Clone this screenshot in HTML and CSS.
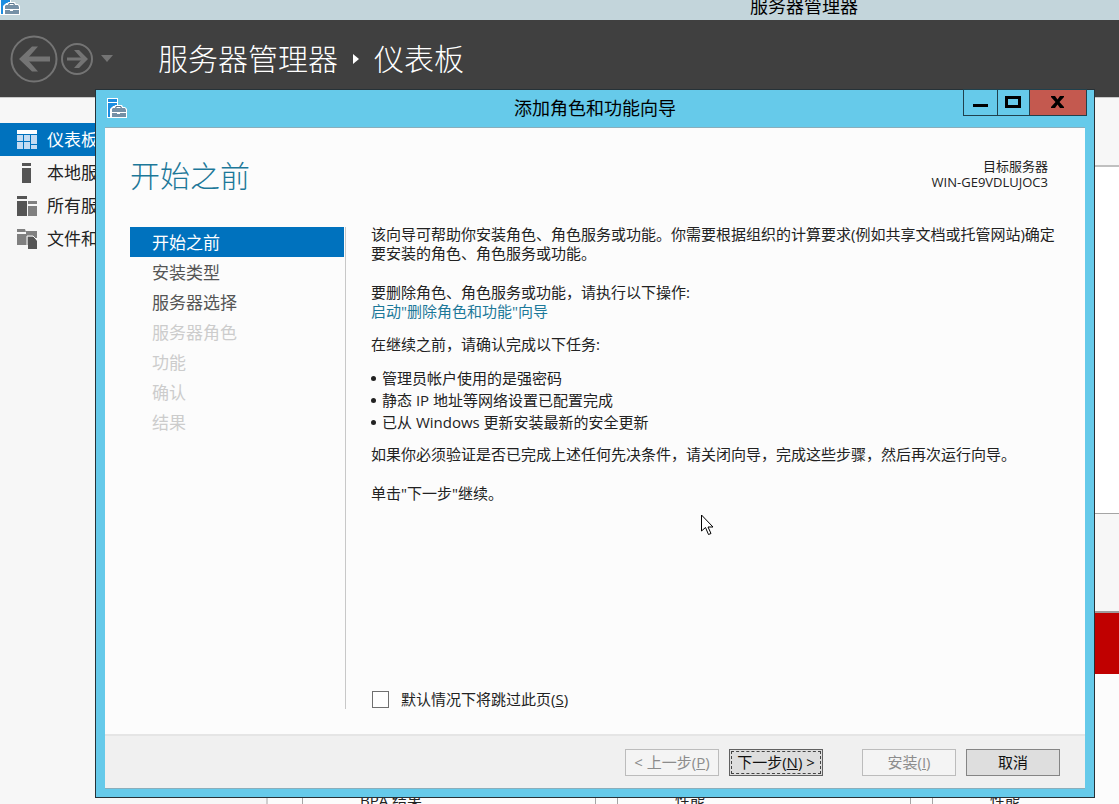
FILE: index.html
```html
<!DOCTYPE html>
<html lang="zh-CN">
<head>
<meta charset="utf-8">
<title>服务器管理器</title>
<link rel="stylesheet" href="styles.css">
</head>
<body>
<svg class="defs" aria-hidden="true">
  <symbol id="app-icon" viewBox="0 0 20 20">
    <path d="M0 0h11v9H7v11H0z" fill="#fff"/>
    <path d="M1 1h9v3H1zM1 5h9v3H6l-2 3v8H1z" fill="#1c8de0"/>
    <path d="M3 11l2-2h2l1-2h7l1 2h2l2 2v9H3z" fill="#fff"/>
    <path d="M5 11l1-1h12l1 2v2H5zM5 15h5v1h3v-1h6v4H5z" fill="#7590a6"/>
    <path d="M8 10l1-2h5l1 2h-1l-1-1h-3l-1 1z" fill="#5c7890"/>
  </symbol>
</svg>

<div class="manager">
  <header class="manager-title">
    <svg class="manager-icon"><use href="#app-icon"/></svg>
    <span>服务器管理器</span>
  </header>

  <div class="banner">
    <button class="nav-button" type="button" aria-label="后退">
      <svg width="48" height="48" viewBox="0 0 48 48" fill="none" stroke="#747474"><circle cx="24" cy="24" r="22.5" stroke-width="2"/><path d="M40 24H14" stroke-width="5"/><path d="M9 24L22 11.500h6L17 24l11 12.500h-6z" fill="#747474" stroke="none"/></svg>
    </button>
    <button class="nav-button" type="button" aria-label="前进">
      <svg width="36" height="34" viewBox="-2 0 36 34" fill="none" stroke="#747474"><circle cx="17" cy="17" r="15" stroke-width="2"/><path d="M7 17h16" stroke-width="3"/><path d="M28 17l-9-9h-5l8 9-8 9h5z" fill="#747474" stroke="none"/></svg>
    </button>
    <button class="nav-button nav-more" type="button" aria-label="历史记录">
      <svg width="14" height="8" viewBox="0 0 14 8"><path d="M1 0h12L7 7z" fill="#747474"/></svg>
    </button>
    <h1 class="crumbs">
      <span>服务器管理器</span>
      <svg width="6" height="10" viewBox="0 0 6 10"><path d="M0 0l6 5-6 5z" fill="#fff"/></svg>
      <span>仪表板</span>
    </h1>
  </div>

  <div class="workspace">
    <nav class="sidebar">
      <a class="side-item side-item-active" href="#dashboard">
        <svg width="20" height="19" viewBox="0 0 20 19"><path d="M0 0h20v4H0z" fill="#fff"/><path d="M0 5h6v6H0zM0 12h6v7H0zM7 5h6v6H7zM7 12h6v7H7zM14 5h6v9h-6zM14 15h6v4h-6z" fill="#c4dcf2"/></svg>
        <span>仪表板</span>
      </a>
      <a class="side-item" href="#local">
        <svg width="20" height="20" viewBox="0 0 20 20"><path d="M5 0h9v3H5zM5 5h9v15H5z" fill="#555"/></svg>
        <span>本地服务器</span>
      </a>
      <a class="side-item" href="#all">
        <svg width="20" height="20" viewBox="0 0 20 20"><path d="M0 0h10v3H0zM0 5h10v15H0z" fill="#555"/><path d="M11 5h9v3h-9zM11 10h9v10h-9z" fill="#808080"/></svg>
        <span>所有服务器</span>
      </a>
      <a class="side-item" href="#files">
        <svg width="20" height="20" viewBox="0 0 20 20"><path d="M0 0h8l1 3H0zM0 5h9V2h11v7h-9v7H0z" fill="#808080"/><path d="M11 8h6l3 4v8h-9z" fill="#555"/><path d="M10 20V7h6l4 4" fill="none" stroke="#f7f7f7"/></svg>
        <span>文件和存储</span>
      </a>
    </nav>
    <main class="dashboard">
      <div class="welcome-head"></div>
      <div class="welcome"></div>
      <div class="tiles">
        <section class="tile"><div class="tile-head"></div><div class="tile-status"></div><p>BPA 结果</p></section>
        <section class="tile"><div class="tile-head"></div><div class="tile-status"></div><p>性能</p></section>
        <section class="tile"><div class="tile-head"></div><div class="tile-status"></div><p>性能</p></section>
      </div>
    </main>
  </div>
</div>

<div class="wizard" role="dialog" aria-labelledby="wizard-title">
  <header class="wizard-title">
    <svg class="wizard-icon"><use href="#app-icon"/></svg>
    <h2 id="wizard-title">添加角色和功能向导</h2>
    <div class="window-controls">
      <button class="control control-min" type="button" aria-label="最小化"><svg width="16" height="14" viewBox="0 0 16 14"><path d="M1 9h15v3H1z"/></svg></button>
      <button class="control control-max" type="button" aria-label="最大化"><svg width="16" height="12" viewBox="0 0 16 12"><path d="M1.500 1.500h13v9h-13z" fill="none" stroke="#000" stroke-width="3"/></svg></button>
      <button class="control control-close" type="button" aria-label="关闭"><svg width="13" height="12" viewBox="0 0 13 12"><path d="M0 0h4l2.500 3.500L9 0h4v1L8.500 6l4.500 5v1H9L6.500 8.500 4 12H0v-1l4.500-5L0 1z"/></svg></button>
    </div>
  </header>

  <div class="wizard-page">
    <div class="page-head">
      <h3>开始之前</h3>
      <p class="target">目标服务器<br>WIN-GE9VDLUJOC3</p>
    </div>
    <div class="page-body">
      <nav class="steps">
        <a class="step step-current" href="#before">开始之前</a>
        <a class="step" href="#type">安装类型</a>
        <a class="step" href="#server">服务器选择</a>
        <span class="step step-off">服务器角色</span>
        <span class="step step-off">功能</span>
        <span class="step step-off">确认</span>
        <span class="step step-off">结果</span>
      </nav>
      <div class="content">
        <p class="intro">该向导可帮助你安装角色、角色服务或功能。你需要根据组织的计算要求(例如共享文档或托管网站)确定要安装的角色、角色服务或功能。</p>
        <p class="remove">要删除角色、角色服务或功能，请执行以下操作:<br><a href="#remove">启动"删除角色和功能"向导</a></p>
        <p>在继续之前，请确认完成以下任务:</p>
        <ul class="tasks">
          <li>管理员帐户使用的是强密码</li>
          <li>静态 IP 地址等网络设置已配置完成</li>
          <li>已从 Windows 更新安装最新的安全更新</li>
        </ul>
        <p class="verify">如果你必须验证是否已完成上述任何先决条件，请关闭向导，完成这些步骤，然后再次运行向导。</p>
        <p>单击"下一步"继续。</p>
        <label class="skip" for="skip-page"><input id="skip-page" type="checkbox"><span>默认情况下将跳过此页(<u>S</u>)</span></label>
      </div>
    </div>
  </div>

  <footer class="wizard-footer">
    <button class="action" type="button" disabled>&lt; 上一步(<u>P</u>)</button>
    <button class="action action-default" type="button">下一步(<u>N</u>) &gt;</button>
    <button class="action action-install" type="button" disabled>安装(<u>I</u>)</button>
    <button class="action" type="button">取消</button>
  </footer>
</div>

<svg class="pointer" width="13" height="22" viewBox="0 0 13 22" aria-hidden="true"><path d="M.5 1v16l4-3.500 3 7 2.500-1-3-6.500h5z" fill="#fff" stroke="#000"/></svg>
</body>
</html>
```
FILE: styles.css
```css
* {
  box-sizing: border-box;
}

body {
  position: relative;
  height: 100vh;
  margin: 0;
  overflow: hidden;
  font-family: "Open Sans", "Noto Sans CJK SC", sans-serif;
  font-size: 15px;
  line-height: 19px;
  color: #222;
}

h1, h2, h3, p, ul {
  margin: 0;
  padding: 0;
  font-weight: 400;
}

a {
  color: inherit;
  text-decoration: none;
}

button {
  padding: 0;
  font: inherit;
}

svg {
  display: block;
  flex: none;
}

.defs {
  position: absolute;
  width: 0;
  height: 0;
}

.manager {
  display: flex;
  flex-direction: column;
  height: 100%;
}

.manager-title {
  display: flex;
  flex: none;
  align-items: flex-end;
  height: 20px;
  background: #c3d5db;
  font-size: 18px;
  line-height: 28px;
  color: #000;
}

.manager-icon {
  width: 20px;
  height: 20px;
  margin: 0 730px 5px 0;
}

.banner {
  display: flex;
  flex: none;
  align-items: center;
  height: 77px;
  padding-left: 10px;
  background: #404040;
}

.nav-button {
  border: 0;
  background: none;
}

.nav-more {
  padding: 0 44px 0 6px;
}

.crumbs {
  display: flex;
  align-items: center;
  gap: 15px;
  font-size: 30px;
  font-weight: 300;
  line-height: 40px;
  color: #fff;
}

.workspace {
  display: flex;
  flex: 1;
  min-height: 0;
  border-top: 1px solid #c8c8c8;
}

.sidebar {
  flex: none;
  width: 268px;
  padding-top: 25px;
  border-right: 2px solid #d0d0d0;
  background: #f7f7f7;
}

.side-item {
  display: flex;
  align-items: center;
  gap: 10px;
  height: 33px;
  padding-left: 17px;
  font-size: 17px;
}

.side-item-active {
  background: #0072be;
  color: #fff;
}

.dashboard {
  display: flex;
  flex: 1;
  flex-direction: column;
  min-width: 0;
  overflow: hidden;
  background: #f7f7f7;
}

.welcome-head {
  flex: none;
  height: 69px;
  border-bottom: 2px solid #c0c0c0;
}

.welcome {
  flex: 1;
  background: #fff;
}

.tiles {
  display: flex;
  flex: none;
  gap: 21px;
  height: 291px;
  padding-left: 34px;
  background: #fcfcfc;
}

.tile {
  flex: none;
  width: 294px;
  border: 1px solid #a5a5a5;
  border-bottom: 0;
}

.tile-head {
  height: 99px;
  border-bottom: 2px solid #a09c9c;
  background: #f7f7f7;
}

.tile-status {
  height: 61px;
  background: #c00000;
}

.tile p {
  padding: 117px 0 0 57px;
  white-space: nowrap;
}

.wizard {
  position: absolute;
  inset: 89px 24px 6px 95px;
  display: flex;
  flex-direction: column;
  padding: 0 9px 8px;
  border: 1px solid #263238;
  background: #66caea;
}

.wizard-title {
  display: grid;
  flex: none;
  grid-template-columns: 1fr auto 1fr;
  height: 37px;
}

.wizard-icon {
  width: 20px;
  height: 20px;
  margin: 8px 0 0 2px;
}

.wizard-title h2 {
  font-size: 18px;
  line-height: 37px;
  color: #000;
}

.window-controls {
  display: flex;
  align-items: flex-start;
  justify-content: flex-end;
  margin-right: -2px;
}

.control {
  display: grid;
  place-items: center;
  height: 27px;
  margin: -1px 0 0 -1px;
  border: 1px solid #20414d;
  background: none;
}

.control svg {
  margin: 0 2px 2px 0;
}

.control-min {
  width: 35px;
}

.control-max {
  width: 33px;
}

.control-close {
  width: 58px;
  background: #c4594f;
}

.wizard-page {
  display: flex;
  flex: 1;
  flex-direction: column;
  min-height: 0;
  padding: 30px 27px 25px 25px;
  border-top: 1px solid #89aebc;
  background: #fcfcfc;
}

.page-head {
  display: flex;
  justify-content: space-between;
  height: 69px;
}

.page-head h3 {
  font-size: 30px;
  font-weight: 300;
  line-height: 36px;
  color: #1c7899;
}

.target {
  padding-right: 10px;
  font-size: 13px;
  line-height: 16px;
  text-align: right;
}

.page-body {
  display: flex;
  flex: 1;
  gap: 25px;
  min-height: 0;
}

.steps {
  flex: none;
  width: 216px;
  padding-right: 1px;
  border-right: 1px solid #c8c8c8;
}

.step {
  display: block;
  height: 30px;
  padding-left: 22px;
  font-size: 17px;
  line-height: 32px;
  color: #555;
}

.step-current {
  background: #0072be;
  color: #fff;
}

.step-off {
  color: #ccc;
}

.content {
  display: flex;
  flex: 1;
  flex-direction: column;
  min-width: 0;
  margin-top: -2px;
}

.intro {
  margin-bottom: 20px;
}

.remove {
  margin-bottom: 14px;
}

.remove a {
  color: #1c7899;
}

.tasks {
  margin: 13px 0 12px;
  list-style: none;
  line-height: 22px;
}

.tasks li {
  display: flex;
  align-items: center;
  gap: 6px;
}

.tasks li::before {
  width: 5px;
  height: 5px;
  border-radius: 50%;
  background: #222;
  content: "";
}

.verify {
  margin-bottom: 20px;
}

.skip {
  display: flex;
  align-items: center;
  gap: 12px;
  margin-top: auto;
}

.skip input {
  width: 17px;
  height: 17px;
  margin: 0 0 0 1px;
  border: 1px solid #707070;
  background: #fff;
  appearance: none;
}

.wizard-footer {
  display: flex;
  flex: none;
  align-items: center;
  justify-content: flex-end;
  gap: 10px;
  height: 55px;
  padding-right: 25px;
  border-top: 2px solid #e5e5e5;
  border-bottom: 1px solid #89aebc;
  background: #f0f0f0;
}

.action {
  width: 94px;
  height: 27px;
  border: 1px solid #858585;
  background: #dedede;
  line-height: 22px;
  color: #111;
  white-space: nowrap;
}

.action:disabled {
  border-color: #bcbcbc;
  background: #f4f4f4;
  color: #8c8c8c;
}

.action-default {
  border-color: #606060;
  outline: 1px dashed #444;
  outline-offset: -3px;
}

.action-install {
  margin-left: 29px;
}

.pointer {
  position: absolute;
  top: 514px;
  left: 701px;
}
```
